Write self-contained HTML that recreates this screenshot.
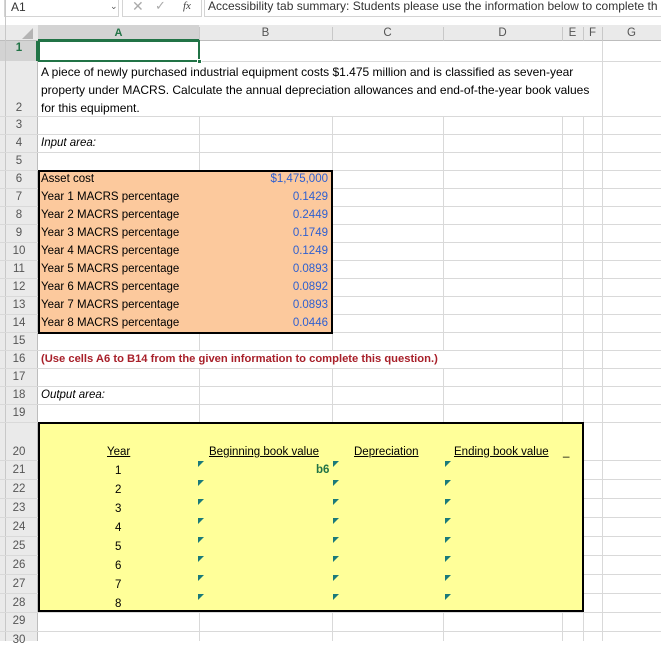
<!DOCTYPE html>
<html><head><meta charset="utf-8"><style>
body{margin:0;width:661px;height:641px;overflow:hidden;background:#fff;font-family:"Liberation Sans",sans-serif;position:relative}
div{position:absolute;box-sizing:border-box}
.t{font-size:11.5px;color:#000;white-space:nowrap;line-height:18px}
.rn{left:0;width:38px;font-size:11.5px;color:#555;text-align:center;padding:0}
.h{background:#d9d9d9}
.v{background:#d9d9d9}
.mk{width:0;height:0;border-top:6px solid #1a7a7a;border-right:6px solid transparent}
.blue{color:#2e5fd0}
.p{font-size:12px}
</style></head><body>
<div style="left:0;top:0;width:661px;height:25px;background:#fff"></div>
<div style="left:4px;top:-2px;width:115px;height:19px;border:1px solid #d4d4d4;background:#fff"></div>
<div class="t" style="left:11px;top:-2px;color:#333;font-size:12px">A1</div>
<div class="t" style="left:110px;top:-3px;color:#555;font-size:9px">&#8964;</div>
<div style="left:122px;top:-2px;width:80px;height:19px;border:1px solid #d4d4d4;background:#fff"></div>
<div class="t" style="left:132px;top:-3px;color:#aaa;font-size:14px">&#10005;</div>
<div class="t" style="left:155px;top:-3px;color:#aaa;font-size:13px">&#10003;</div>
<div class="t" style="left:183px;top:-3px;color:#444;font-size:11px;font-style:italic;font-family:'Liberation Serif',serif">fx</div>
<div style="left:204px;top:-2px;width:470px;height:19px;border:1px solid #d4d4d4;background:#fff"></div>
<div class="t" style="left:208px;top:-3px;color:#333;font-size:12px">Accessibility tab summary: Students please use the information below to complete th</div>
<div style="left:0;top:25px;width:661px;height:16px;background:#eaeaea;border-bottom:1px solid #bdbdbd"></div>
<div style="left:38px;top:25px;width:161px;height:16px;background:#d3d3d3;border-bottom:2px solid #217346"></div>
<div style="left:22px;top:28px;width:0;height:0;border-bottom:11px solid #b4b4b4;border-left:11px solid transparent"></div>
<div class="t" style="left:38px;top:24px;width:161px;text-align:center;color:#217346;font-weight:bold;font-size:11px">A</div>
<div class="t" style="left:199px;top:24px;width:133px;text-align:center;color:#555">B</div>
<div class="t" style="left:332px;top:24px;width:111px;text-align:center;color:#555">C</div>
<div class="t" style="left:443px;top:24px;width:119px;text-align:center;color:#555">D</div>
<div class="t" style="left:562px;top:24px;width:21px;text-align:center;color:#555">E</div>
<div class="t" style="left:583px;top:24px;width:19px;text-align:center;color:#555">F</div>
<div class="t" style="left:602px;top:24px;width:59px;text-align:center;color:#555">G</div>
<div style="left:199px;top:27px;width:1px;height:14px;background:#c8c8c8"></div>
<div style="left:332px;top:27px;width:1px;height:14px;background:#c8c8c8"></div>
<div style="left:443px;top:27px;width:1px;height:14px;background:#c8c8c8"></div>
<div style="left:562px;top:27px;width:1px;height:14px;background:#c8c8c8"></div>
<div style="left:583px;top:27px;width:1px;height:14px;background:#c8c8c8"></div>
<div style="left:602px;top:27px;width:1px;height:14px;background:#c8c8c8"></div>
<div style="left:0;top:41px;width:38px;height:600px;background:#eaeaea;border-right:1px solid #bdbdbd"></div>
<div style="left:0;top:41px;width:38px;height:20px;background:#d3d3d3;border-right:2px solid #217346"></div>
<div style="left:5px;top:0;width:1px;height:641px;background:#c8c8c8"></div>
<div class="h" style="left:38px;top:61px;width:623px;height:1px"></div>
<div class="h" style="left:0;top:116px;width:661px;height:1px"></div>
<div class="h" style="left:0;top:134px;width:661px;height:1px"></div>
<div class="h" style="left:0;top:152px;width:661px;height:1px"></div>
<div class="h" style="left:0;top:170px;width:661px;height:1px"></div>
<div class="h" style="left:0;top:188px;width:661px;height:1px"></div>
<div class="h" style="left:0;top:206px;width:661px;height:1px"></div>
<div class="h" style="left:0;top:224px;width:661px;height:1px"></div>
<div class="h" style="left:0;top:242px;width:661px;height:1px"></div>
<div class="h" style="left:0;top:260px;width:661px;height:1px"></div>
<div class="h" style="left:0;top:278px;width:661px;height:1px"></div>
<div class="h" style="left:0;top:296px;width:661px;height:1px"></div>
<div class="h" style="left:0;top:314px;width:661px;height:1px"></div>
<div class="h" style="left:0;top:332px;width:661px;height:1px"></div>
<div class="h" style="left:0;top:350px;width:661px;height:1px"></div>
<div class="h" style="left:0;top:368px;width:661px;height:1px"></div>
<div class="h" style="left:0;top:386px;width:661px;height:1px"></div>
<div class="h" style="left:0;top:404px;width:661px;height:1px"></div>
<div class="h" style="left:0;top:422px;width:661px;height:1px"></div>
<div class="h" style="left:0;top:460px;width:661px;height:1px"></div>
<div class="h" style="left:0;top:479px;width:661px;height:1px"></div>
<div class="h" style="left:0;top:498px;width:661px;height:1px"></div>
<div class="h" style="left:0;top:517px;width:661px;height:1px"></div>
<div class="h" style="left:0;top:536px;width:661px;height:1px"></div>
<div class="h" style="left:0;top:555px;width:661px;height:1px"></div>
<div class="h" style="left:0;top:574px;width:661px;height:1px"></div>
<div class="h" style="left:0;top:593px;width:661px;height:1px"></div>
<div class="h" style="left:0;top:612px;width:661px;height:1px"></div>
<div class="h" style="left:0;top:631px;width:661px;height:1px"></div>
<div class="v" style="left:199px;top:116px;width:1px;height:525px"></div>
<div class="v" style="left:199px;top:41px;width:1px;height:20px"></div>
<div class="v" style="left:332px;top:116px;width:1px;height:525px"></div>
<div class="v" style="left:443px;top:116px;width:1px;height:525px"></div>
<div class="v" style="left:562px;top:116px;width:1px;height:525px"></div>
<div class="v" style="left:583px;top:116px;width:1px;height:525px"></div>
<div class="v" style="left:602px;top:41px;width:1px;height:600px"></div>
<div style="left:38px;top:40px;width:162px;height:22px;border:2px solid #217346;background:#fff"></div>
<div style="left:197px;top:59px;width:5px;height:5px;background:#217346;border:1px solid #fff"></div>
<div class="t rn" style="top:39px;color:#217346;font-weight:bold">1</div>
<div class="t rn" style="top:99px">2</div>
<div class="t rn" style="top:116px">3</div>
<div class="t rn" style="top:134px">4</div>
<div class="t rn" style="top:152px">5</div>
<div class="t rn" style="top:170px">6</div>
<div class="t rn" style="top:188px">7</div>
<div class="t rn" style="top:206px">8</div>
<div class="t rn" style="top:224px">9</div>
<div class="t rn" style="top:242px">10</div>
<div class="t rn" style="top:260px">11</div>
<div class="t rn" style="top:278px">12</div>
<div class="t rn" style="top:296px">13</div>
<div class="t rn" style="top:314px">14</div>
<div class="t rn" style="top:332px">15</div>
<div class="t rn" style="top:350px">16</div>
<div class="t rn" style="top:368px">17</div>
<div class="t rn" style="top:386px">18</div>
<div class="t rn" style="top:404px">19</div>
<div class="t rn" style="top:443px">20</div>
<div class="t rn" style="top:461px">21</div>
<div class="t rn" style="top:480px">22</div>
<div class="t rn" style="top:499px">23</div>
<div class="t rn" style="top:518px">24</div>
<div class="t rn" style="top:537px">25</div>
<div class="t rn" style="top:556px">26</div>
<div class="t rn" style="top:575px">27</div>
<div class="t rn" style="top:594px">28</div>
<div class="t rn" style="top:612px">29</div>
<div class="t rn" style="top:631px">30</div>
<div class="t p" style="left:41px;top:63px">A piece of newly purchased industrial equipment costs $1.475 million and is classified as seven-year</div>
<div class="t p" style="left:41px;top:81px">property under MACRS. Calculate the annual depreciation allowances and end-of-the-year book values</div>
<div class="t p" style="left:41px;top:99px">for this equipment.</div>
<div class="t" style="left:41px;top:134px;font-style:italic">Input area:</div>
<div style="left:38px;top:170px;width:295px;height:164px;background:#fcc99d;border:2px solid #000"></div>
<div class="t" style="left:41px;top:170px">Asset cost</div>
<div class="t blue" style="left:200px;top:170px;width:128px;text-align:right">$1,475,000</div>
<div class="t" style="left:41px;top:188px">Year 1 MACRS percentage</div><div class="t blue" style="left:200px;top:188px;width:128px;text-align:right">0.1429</div>
<div class="t" style="left:41px;top:206px">Year 2 MACRS percentage</div><div class="t blue" style="left:200px;top:206px;width:128px;text-align:right">0.2449</div>
<div class="t" style="left:41px;top:224px">Year 3 MACRS percentage</div><div class="t blue" style="left:200px;top:224px;width:128px;text-align:right">0.1749</div>
<div class="t" style="left:41px;top:242px">Year 4 MACRS percentage</div><div class="t blue" style="left:200px;top:242px;width:128px;text-align:right">0.1249</div>
<div class="t" style="left:41px;top:260px">Year 5 MACRS percentage</div><div class="t blue" style="left:200px;top:260px;width:128px;text-align:right">0.0893</div>
<div class="t" style="left:41px;top:278px">Year 6 MACRS percentage</div><div class="t blue" style="left:200px;top:278px;width:128px;text-align:right">0.0892</div>
<div class="t" style="left:41px;top:296px">Year 7 MACRS percentage</div><div class="t blue" style="left:200px;top:296px;width:128px;text-align:right">0.0893</div>
<div class="t" style="left:41px;top:314px">Year 8 MACRS percentage</div><div class="t blue" style="left:200px;top:314px;width:128px;text-align:right">0.0446</div>
<div style="left:39px;top:351px;width:405px;height:17px;background:#fff"></div>
<div class="t" style="left:41px;top:350px;color:#a8202a;font-weight:bold;font-size:11.2px">(Use cells A6 to B14 from the given information to complete this question.)</div>
<div class="t" style="left:41px;top:386px;font-style:italic">Output area:</div>
<div style="left:38px;top:422px;width:546px;height:190px;background:#ffff99;border:2px solid #000"></div>
<div class="t" style="left:107px;top:443px;text-decoration:underline">Year</div>
<div class="t" style="left:209px;top:443px;text-decoration:underline">Beginning book value</div>
<div class="t" style="left:354px;top:443px;text-decoration:underline">Depreciation</div>
<div class="t" style="left:454px;top:443px;text-decoration:underline">Ending book value</div>
<div class="t" style="left:563px;top:443px">_</div>
<div class="t" style="left:115px;top:462px">1</div>
<div class="t" style="left:115px;top:481px">2</div>
<div class="t" style="left:115px;top:500px">3</div>
<div class="t" style="left:115px;top:519px">4</div>
<div class="t" style="left:115px;top:538px">5</div>
<div class="t" style="left:115px;top:557px">6</div>
<div class="t" style="left:115px;top:576px">7</div>
<div class="t" style="left:115px;top:595px">8</div>
<div class="t" style="left:316px;top:461px;color:#217346;font-weight:bold">b6</div>
<div class="mk" style="left:198px;top:461px"></div><div class="mk" style="left:333px;top:461px"></div><div class="mk" style="left:445px;top:461px"></div>
<div class="mk" style="left:198px;top:480px"></div><div class="mk" style="left:333px;top:480px"></div><div class="mk" style="left:445px;top:480px"></div>
<div class="mk" style="left:198px;top:499px"></div><div class="mk" style="left:333px;top:499px"></div><div class="mk" style="left:445px;top:499px"></div>
<div class="mk" style="left:198px;top:518px"></div><div class="mk" style="left:333px;top:518px"></div><div class="mk" style="left:445px;top:518px"></div>
<div class="mk" style="left:198px;top:537px"></div><div class="mk" style="left:333px;top:537px"></div><div class="mk" style="left:445px;top:537px"></div>
<div class="mk" style="left:198px;top:556px"></div><div class="mk" style="left:333px;top:556px"></div><div class="mk" style="left:445px;top:556px"></div>
<div class="mk" style="left:198px;top:575px"></div><div class="mk" style="left:333px;top:575px"></div><div class="mk" style="left:445px;top:575px"></div>
<div class="mk" style="left:198px;top:594px"></div><div class="mk" style="left:333px;top:594px"></div><div class="mk" style="left:445px;top:594px"></div>
</body></html>
